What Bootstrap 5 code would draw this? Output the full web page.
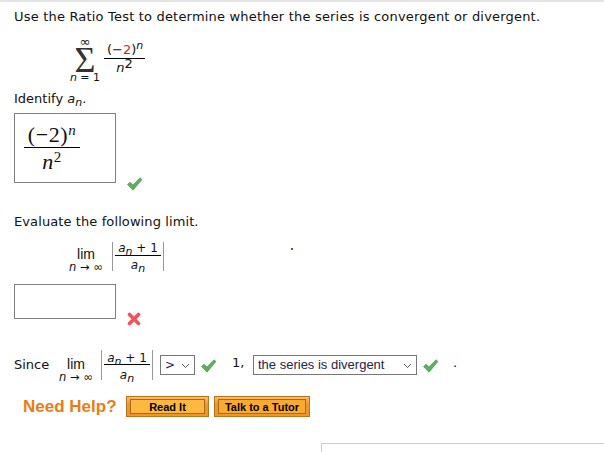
<!DOCTYPE html>
<html lang="en">
<head>
    <meta charset="UTF-8">
    <title>Ratio Test</title>
    <link href="https://cdn.jsdelivr.net/npm/bootstrap@5.3.3/dist/css/bootstrap.min.css" rel="stylesheet">
    <style>
    body { font-family: "DejaVu Sans", Verdana, sans-serif; font-size: 13px; line-height: 16px; color: #111; background: #fff; overflow: hidden; }
    .page-wrap { height: 452px; border-top: 2px solid #e4e4e4; padding: 7px 0 0 14px; position: relative; }
    .q-line { height: 16px; margin: 0; white-space: nowrap; letter-spacing: .19px; }
    .sub-n { font-size: 11px; font-style: italic; position: relative; top: 3px; }
    .sum-row { height: 48px; margin: 11px 0 0 55px; }
    .sum-col { width: 32px; text-align: center; font-size: 11px; line-height: 12px; }
    .sum-inf { font-size: 13px; }
    .sum-sign { font-family: "Liberation Serif", serif; font-size: 36px; line-height: 24px; height: 24px; color: #333; }
    .frac-box { text-align: center; }
    .frac-top { border-bottom: 1px solid #000; line-height: 16px; padding: 0 3px; white-space: nowrap; }
    .frac-bot { line-height: 18px; white-space: nowrap; }
    .sum-row .frac-box { width: 41px; margin: 6px 0 0 3px; }
    .frac-bot sup { font-size: 13px; top: -.3em; line-height: 0; }
    .red-num { color: #e8141c; }
    sup.up-n { font-size: 11px; top: -.45em; line-height: 0; }
    .ident-line { margin-top: 7px; height: 16px; }
    .ans-box { width: 102px; border: 1px solid #808080; background: #fff; }
    .ans-tall { height: 70px; margin-top: 6px; padding: 9px 0 0 9px; }
    .ans-low { height: 35px; margin-top: 10px; }
    .tex-frac { width: 56px; text-align: center; font-family: "Liberation Serif", serif; font-size: 22px; letter-spacing: .6px; }
    .tex-top { line-height: 24px; height: 25px; border-bottom: 1px solid #000; white-space: nowrap; }
    .tex-bot { line-height: 28px; }
    .tex-frac i { font-style: italic; }
    .tex-frac sup { font-size: 15px; top: -.5em; line-height: 0; }
    .mark-slot { display: block; margin-left: 113px; }
    .mark-ok { margin-top: -6px; }
    .mark-bad { margin-top: -7px; }
    .eval-line { margin-top: 23px; height: 16px; letter-spacing: .1px; }
    .lim-row { margin: 12px 0 0 50px; height: 32px; }
    .lim-col { width: 44px; text-align: center; line-height: 14px; padding-top: 4px; }
    .lim-word { font-family: "Liberation Sans", Arial, sans-serif; font-size: 14px; line-height: 16px; }
    .lim-sub { font-size: 11.5px; line-height: 10px; white-space: nowrap; }
    .abs-frac { border-left: 1px solid #999; border-right: 1px solid #999; height: 29px; margin-left: 4px; padding: 0 2px; width: 52px; text-align: center; font-size: 12px; }
    .abs-frac .frac-top { padding: 0; line-height: 13px; height: 14px; white-space: nowrap; }
    .abs-frac .frac-bot { line-height: 19px; }
    .stray-dot { width: 2px; height: 2px; background: #4a4ad0; margin: 6px 0 0 127px; }
    .since-row { margin-top: 24px; height: 36px; }
    .since-txt { width: 44px; padding-top: 7px; }
    .since-row .lim-col { width: 36px; padding-top: 6px; }
    .since-row .abs-frac { margin-left: 7px; height: 30px; }
    .since-row .frac-top { line-height: 16px; height: 15px; }
    .since-row .frac-bot { line-height: 21px; }
    .sel-box { height: 20px; margin-top: 5px; border: 1px solid #777; background: #fff; font-size: 12px; line-height: 18px; padding: 0 4px; color: #23234a; position: relative; }
    .sel-cmp { width: 35px; margin-left: 7px; }
    .sel-text { width: 164px; font-family: "Liberation Sans", Arial, sans-serif; font-size: 13px; }
    .sel-caret { position: absolute; right: 4px; top: 7px; }
    .check-inline { margin: 9px 0 0 6px; flex: none; }
    .one-txt { margin: 5px 0 0 16px; width: 21px; }
    .end-dot { margin: 5px 0 0 15px; }
    .help-row { margin: 10px 0 0 9px; height: 21px; }
    .need-help { font-family: "Liberation Sans", Arial, sans-serif; font-weight: 700; font-size: 17px; color: #ea7d12; width: 103px; white-space: nowrap; }
    .tutor-btn { height: 21px; padding: 2px 3px; background: linear-gradient(#f8bb6e, #ee962a 40%); border: 1px solid #b9741f; margin-right: 5px; }
    .tutor-btn span { display: block; height: 15px; line-height: 14px; border: 1px solid #a86a18; background: #fdb93f; font-family: "Liberation Sans", Arial, sans-serif; font-size: 11px; font-weight: 700; color: #000; text-align: center; white-space: nowrap; }
    .btn-read { width: 83px; }
    .btn-talk { width: 96px; }
    .btn-talk span { background: #fbaa30; }
    .corner-box { position: absolute; left: 321px; top: 441px; width: 283px; height: 12px; border: 1px solid #ccc; border-width: 1px 0 0 1px; }
    </style>
</head>
<body>
    <div class="page-wrap">
        <p class="q-line">Use the Ratio Test to determine whether the series is convergent or divergent.</p>

        <!-- serie -->
        <div class="sum-row d-flex">
            <div class="sum-col">
                <div class="sum-inf">∞</div>
                <div class="sum-sign">Σ</div>
                <div><i>n</i> = 1</div>
            </div>
            <div class="frac-box">
                <div class="frac-top">(−<span class="red-num">2</span>)<sup class="up-n"><i>n</i></sup></div>
                <div class="frac-bot"><i>n</i><sup>2</sup></div>
            </div>
        </div>

        <div class="ident-line">Identify <i>a<span class="sub-n">n</span></i>.</div>
        <div class="ans-box ans-tall">
            <div class="tex-frac">
                <div class="tex-top">(−2)<sup><i>n</i></sup></div>
                <div class="tex-bot"><i>n</i><sup>2</sup></div>
            </div>
        </div>
        <svg class="mark-slot mark-ok" width="15" height="14" viewBox="0 0 15 14"><path d="M.5 7.5 L3 5.2 L6 8 L13 .8 L15 2.5 L6 13.2 Z" fill="#5cb25c" stroke="#3f8f45" stroke-width=".6"/></svg>

        <div class="eval-line">Evaluate the following limit.</div>
        <div class="lim-row d-flex">
            <div class="lim-col">
                <div class="lim-word">lim</div>
                <div class="lim-sub"><i>n</i> → ∞</div>
            </div>
            <div class="abs-frac">
                <div class="frac-top"><i>a<span class="sub-n">n</span></i> + 1</div>
                <div class="frac-bot"><i>a<span class="sub-n">n</span></i></div>
            </div>
            <div class="stray-dot"></div>
        </div>

        <div class="ans-box ans-low"></div>
        <svg class="mark-slot mark-bad" width="14" height="14" viewBox="0 0 14 14"><path d="M2.5 2.5 L11.5 11.5 M11.5 2.5 L2.5 11.5" stroke="#f4505a" stroke-width="3.6" stroke-linecap="round"/></svg>

        <div class="since-row d-flex align-items-start">
            <div class="since-txt">Since</div>
            <div class="lim-col">
                <div class="lim-word">lim</div>
                <div class="lim-sub"><i>n</i> → ∞</div>
            </div>
            <div class="abs-frac">
                <div class="frac-top"><i>a<span class="sub-n">n</span></i> + 1</div>
                <div class="frac-bot"><i>a<span class="sub-n">n</span></i></div>
            </div>
            <div class="sel-box sel-cmp">&gt;<svg class="sel-caret" width="9" height="6" viewBox="0 0 9 6"><path d="M1 1 L4.5 4.5 L8 1" fill="none" stroke="#555" stroke-width="1"/></svg></div>
            <svg class="check-inline" width="15" height="14" viewBox="0 0 15 14"><path d="M.5 7.5 L3 5.2 L6 8 L13 .8 L15 2.5 L6 13.2 Z" fill="#5cb25c" stroke="#3f8f45" stroke-width=".6"/></svg>
            <div class="one-txt">1,</div>
            <div class="sel-box sel-text">the series is divergent<svg class="sel-caret" width="9" height="6" viewBox="0 0 9 6"><path d="M1 1 L4.5 4.5 L8 1" fill="none" stroke="#555" stroke-width="1"/></svg></div>
            <svg class="check-inline" width="15" height="14" viewBox="0 0 15 14"><path d="M.5 7.5 L3 5.2 L6 8 L13 .8 L15 2.5 L6 13.2 Z" fill="#5cb25c" stroke="#3f8f45" stroke-width=".6"/></svg>
            <div class="end-dot">.</div>
        </div>

        <div class="help-row d-flex align-items-center">
            <div class="need-help">Need Help?</div>
            <div class="tutor-btn btn-read"><span>Read It</span></div>
            <div class="tutor-btn btn-talk"><span>Talk to a Tutor</span></div>
        </div>

        <div class="corner-box"></div>
    </div>
    <script src="https://cdn.jsdelivr.net/npm/bootstrap@5.3.3/dist/js/bootstrap.bundle.min.js"></script>
</body>
</html>
